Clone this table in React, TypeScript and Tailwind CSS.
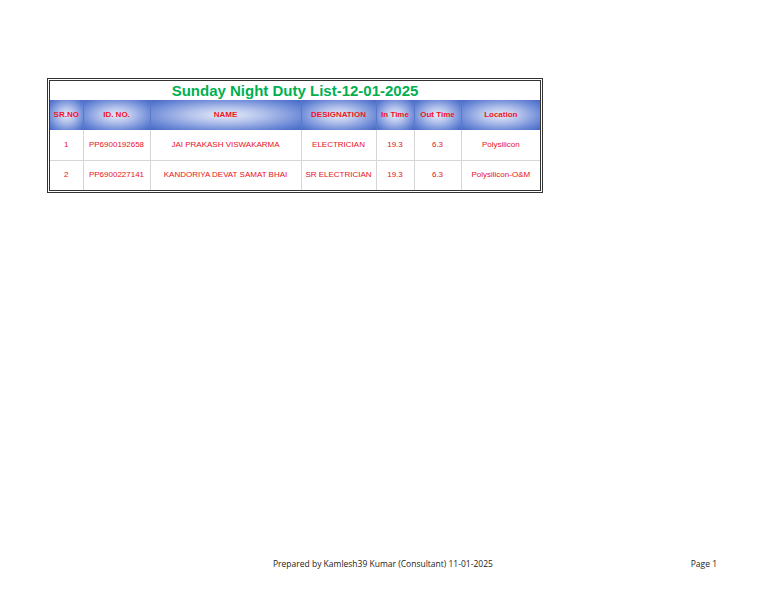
import React from "react";

type Duty = {
  sr: number;
  id: string;
  name: string;
  designation: string;
  inTime: string;
  outTime: string;
  location: string;
};

const rows: Duty[] = [
  {
    sr: 1,
    id: "PP6900192658",
    name: "JAI PRAKASH VISWAKARMA",
    designation: "ELECTRICIAN",
    inTime: "19.3",
    outTime: "6.3",
    location: "Polysilicon",
  },
  {
    sr: 2,
    id: "PP6900227141",
    name: "KANDORIYA DEVAT SAMAT BHAI",
    designation: "SR ELECTRICIAN",
    inTime: "19.3",
    outTime: "6.3",
    location: "Polysilicon-O&M",
  },
];

const columns = [
  { label: "SR.NO", width: "w-[33px]" },
  { label: "ID. NO.", width: "w-[67px]" },
  { label: "NAME", width: "w-[151px]" },
  { label: "DESIGNATION", width: "w-[75px]" },
  { label: "In Time", width: "w-[38px]" },
  { label: "Out Time", width: "w-[47px]" },
  { label: "Location", width: "w-[79px]" },
];

export default function App() {
  return (
    <div className="flex h-[594px] w-[768px] flex-col bg-white font-['Liberation_Sans',Arial,sans-serif]">
      <div className="ml-[47px] mt-[78px] w-[496px] border-[3px] border-double border-[#333]">
        <table className="w-[490px] table-fixed border-collapse">
          <colgroup>
            {columns.map((c) => (
              <col key={c.label} className={c.width} />
            ))}
          </colgroup>
          <thead>
            <tr>
              <th
                colSpan={7}
                className="h-[19px] p-0 text-center text-[15px] font-bold leading-[19px] text-[#00b050]"
              >
                Sunday Night Duty List-12-01-2025
              </th>
            </tr>
            <tr className="h-[30px]">
              {columns.map((c) => (
                <th
                  key={c.label}
                  className="whitespace-nowrap border-r border-[#5a79c9] bg-[radial-gradient(ellipse_at_center,#e6ebf8_0%,#b3c2eb_35%,#6a88d6_75%,#4668c5_100%)] p-0 text-center text-[8px] font-bold text-[#f0141e] last:border-r-0"
                >
                  {c.label}
                </th>
              ))}
            </tr>
          </thead>
          <tbody className="whitespace-nowrap text-[8px] text-[#e8101c]">
            {rows.map((r, i) => (
              <tr key={r.sr} className={i === 0 ? "h-[30px] border-b border-[#d6d6d6]" : "h-[30px]"}>
                <td className="border-r border-[#d6d6d6] p-0 text-center">{r.sr}</td>
                <td className="border-r border-[#d6d6d6] p-0 text-center">{r.id}</td>
                <td className="border-r border-[#d6d6d6] p-0 text-center">{r.name}</td>
                <td className="border-r border-[#d6d6d6] p-0 text-center">{r.designation}</td>
                <td className="border-r border-[#d6d6d6] p-0 text-center">{r.inTime}</td>
                <td className="border-r border-[#d6d6d6] p-0 text-center">{r.outTime}</td>
                <td className="p-0 text-center">{r.location}</td>
              </tr>
            ))}
          </tbody>
        </table>
      </div>

      <div className="mt-auto mb-[23px] flex items-center text-[8.5px] text-[#222] font-['Open_Sans','Liberation_Sans',sans-serif]">
        <span className="ml-[273px]">Prepared by Kamlesh39 Kumar (Consultant) 11-01-2025</span>
        <span className="ml-auto mr-[51px]">Page 1</span>
      </div>
    </div>
  );
}
